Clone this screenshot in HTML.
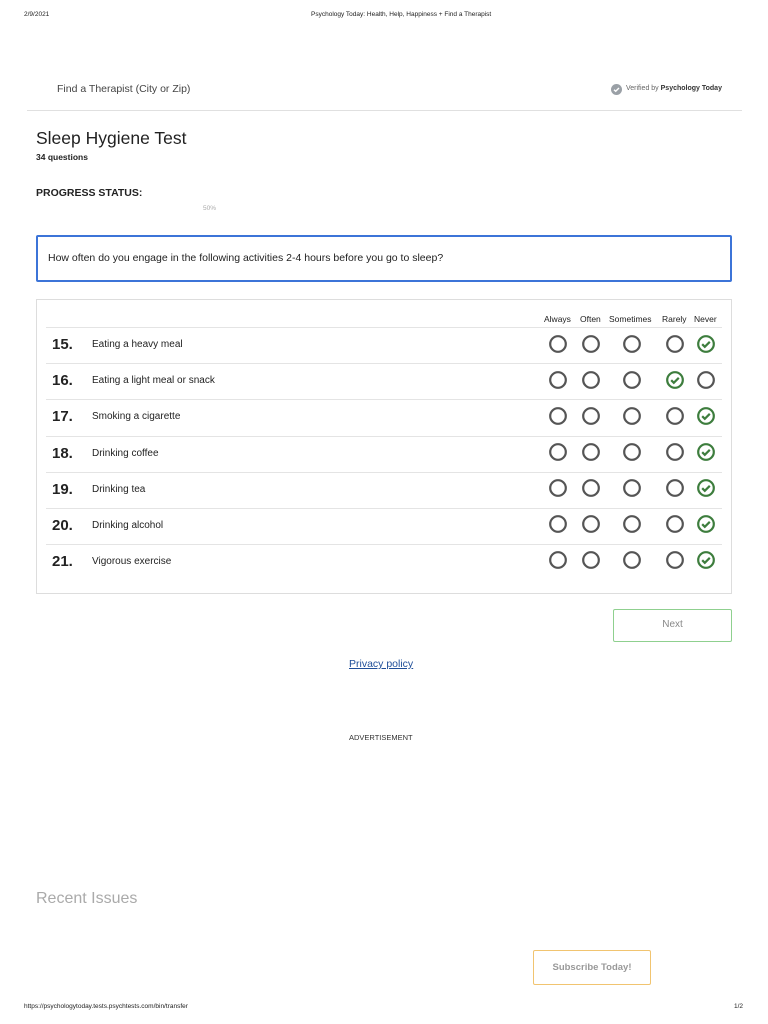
<!DOCTYPE html>
<html><head><meta charset="utf-8"><style>
*{margin:0;padding:0;box-sizing:border-box}
body{width:768px;height:1024px;position:relative;background:#fff;font-family:"Liberation Sans",sans-serif;color:#222;overflow:hidden}
.a{position:absolute;white-space:nowrap}
.hl{position:absolute;left:46px;width:676px;height:1px;background:#e4e4e4}
.num{position:absolute;left:52px;font-size:15px;font-weight:bold;color:#222}
.lab{position:absolute;left:92px;font-size:10px;color:#222}
.hd{position:absolute;top:314px;font-size:8.5px;color:#222}
</style></head><body>
<div class="a" style="left:24px;top:11px;font-size:6.5px">2/9/2021</div>
<div class="a" style="left:311px;top:11px;font-size:6.5px">Psychology Today: Health, Help, Happiness + Find a Therapist</div>
<div class="a" style="left:57px;top:83px;font-size:10.5px;color:#444">Find a Therapist (City or Zip)</div>
<svg class="a" style="left:611px;top:84px" width="11" height="11" viewBox="0 0 11 11"><circle cx="5.5" cy="5.5" r="5.5" fill="#9aa0a6"/><path d="M3 5.7l1.7 1.6L8 4" stroke="#fff" stroke-width="1.4" fill="none"/></svg>
<div class="a" style="left:626px;top:85px;font-size:7px;color:#666">Verified by <b style="color:#333">Psychology Today</b></div>
<div class="a" style="left:27px;top:110px;width:715px;height:1px;background:#e0e0e0"></div>
<div class="a" style="left:36px;top:128px;font-size:17.5px;color:#222">Sleep Hygiene Test</div>
<div class="a" style="left:36px;top:152px;font-size:8.5px;font-weight:bold">34 questions</div>
<div class="a" style="left:36px;top:187px;font-size:10.5px;font-weight:bold">PROGRESS STATUS:</div>
<div class="a" style="left:203px;top:205px;font-size:6.5px;color:#aaa">50%</div>
<div class="a" style="left:36px;top:235px;width:696px;height:47px;border:2.5px solid #3c74d8;border-radius:2px"></div>
<div class="a" style="left:48px;top:252px;font-size:10.5px;color:#222">How often do you engage in the following activities 2-4 hours before you go to sleep?</div>
<div class="a" style="left:36px;top:299px;width:696px;height:295px;border:1px solid #ddd"></div>
<div class="hd" style="left:544px">Always</div>
<div class="hd" style="left:580px">Often</div>
<div class="hd" style="left:609px">Sometimes</div>
<div class="hd" style="left:662px">Rarely</div>
<div class="hd" style="left:694px">Never</div>
<div class="hl" style="top:327px"></div><div class="hl" style="top:363px"></div><div class="hl" style="top:399px"></div><div class="hl" style="top:436px"></div><div class="hl" style="top:472px"></div><div class="hl" style="top:508px"></div><div class="hl" style="top:544px"></div>
<div class="num" style="top:336px">15.</div><div class="lab" style="top:339px">Eating a heavy meal</div>
<div class="num" style="top:372px">16.</div><div class="lab" style="top:375px">Eating a light meal or snack</div>
<div class="num" style="top:408px">17.</div><div class="lab" style="top:411px">Smoking a cigarette</div>
<div class="num" style="top:445px">18.</div><div class="lab" style="top:448px">Drinking coffee</div>
<div class="num" style="top:481px">19.</div><div class="lab" style="top:484px">Drinking tea</div>
<div class="num" style="top:517px">20.</div><div class="lab" style="top:520px">Drinking alcohol</div>
<div class="num" style="top:553px">21.</div><div class="lab" style="top:556px">Vigorous exercise</div>
<svg class="a" style="left:0;top:0" width="768" height="600">
<defs>
<g id="o"><circle r="7.8" fill="none" stroke="#555" stroke-width="2.2"/></g>
<g id="c"><circle r="7.8" fill="none" stroke="#3d7d3d" stroke-width="2.2"/><path d="M-3.8 0.2l2.6 2.6 5-5" stroke="#3d7d3d" stroke-width="2.2" fill="none"/></g>
</defs>
<g transform="translate(0,344)"><use href="#o" x="558"/><use href="#o" x="591"/><use href="#o" x="632"/><use href="#o" x="675"/><use href="#c" x="706"/></g>
<g transform="translate(0,380)"><use href="#o" x="558"/><use href="#o" x="591"/><use href="#o" x="632"/><use href="#c" x="675"/><use href="#o" x="706"/></g>
<g transform="translate(0,416)"><use href="#o" x="558"/><use href="#o" x="591"/><use href="#o" x="632"/><use href="#o" x="675"/><use href="#c" x="706"/></g>
<g transform="translate(0,452)"><use href="#o" x="558"/><use href="#o" x="591"/><use href="#o" x="632"/><use href="#o" x="675"/><use href="#c" x="706"/></g>
<g transform="translate(0,488)"><use href="#o" x="558"/><use href="#o" x="591"/><use href="#o" x="632"/><use href="#o" x="675"/><use href="#c" x="706"/></g>
<g transform="translate(0,524)"><use href="#o" x="558"/><use href="#o" x="591"/><use href="#o" x="632"/><use href="#o" x="675"/><use href="#c" x="706"/></g>
<g transform="translate(0,560)"><use href="#o" x="558"/><use href="#o" x="591"/><use href="#o" x="632"/><use href="#o" x="675"/><use href="#c" x="706"/></g>
</svg>
<div class="a" style="left:613px;top:609px;width:119px;height:33px;border:1.5px solid #8fd08f;border-radius:2px;text-align:center;line-height:30px;font-size:10px;color:#888">Next</div>
<div class="a" style="left:349px;top:658px;font-size:10.5px;color:#1f4e99;text-decoration:underline">Privacy policy</div>
<div class="a" style="left:349px;top:733px;font-size:7.5px;color:#333">ADVERTISEMENT</div>
<div class="a" style="left:36px;top:890px;font-size:16px;color:#aaa">Recent Issues</div>
<div class="a" style="left:533px;top:950px;width:118px;height:35px;border:1px solid #f1c470;border-radius:2px;text-align:center;line-height:33px;font-size:9.5px;font-weight:bold;color:#999">Subscribe Today!</div>
<div class="a" style="left:24px;top:1003px;font-size:6.5px">https://psychologytoday.tests.psychtests.com/bin/transfer</div>
<div class="a" style="left:734px;top:1003px;font-size:6.5px">1/2</div>
</body></html>
